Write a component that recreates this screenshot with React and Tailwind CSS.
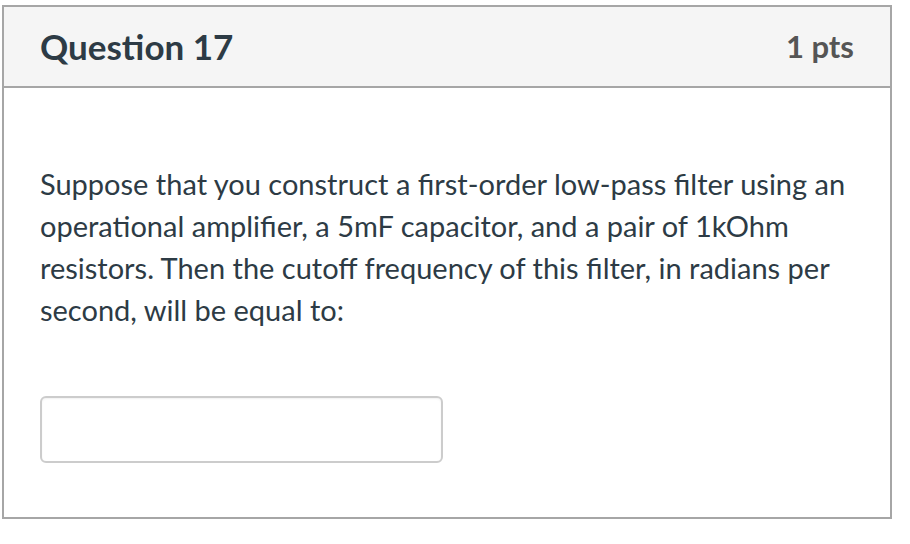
export default function App() {
  return (
    <div className="bg-white min-h-screen pt-[5px] pl-[2px] font-['Lato',sans-serif]">
      <div className="w-[890px] border-2 border-[#a6a6a6] bg-white">
        <div className="h-[81px] flex items-center justify-between px-[36px] bg-[#f5f5f5] border-b-2 border-[#a6a6a6]">
          <h2 className="text-[35px] font-bold text-[#2d3b45]">Question 17</h2>
          <div className="text-[31px] font-bold text-[#555555]">1 pts</div>
        </div>
        <div className="px-[36px] pt-[75px] pb-[54px]">
          <p className="text-[29px] leading-[42px] text-[#2d3b45]">
            Suppose that you construct a first-order low-pass filter using an operational amplifier, a 5mF capacitor, and a pair of 1kOhm resistors. Then the cutoff frequency of this filter, in radians per second, will be equal to:
          </p>
          <input
            type="text"
            className="mt-[65px] block w-[403px] h-[67px] border-2 border-[#cccccc] rounded-[6px] bg-white shadow-[inset_0_1px_2px_rgba(0,0,0,0.06)]"
          />
        </div>
      </div>
    </div>
  );
}
